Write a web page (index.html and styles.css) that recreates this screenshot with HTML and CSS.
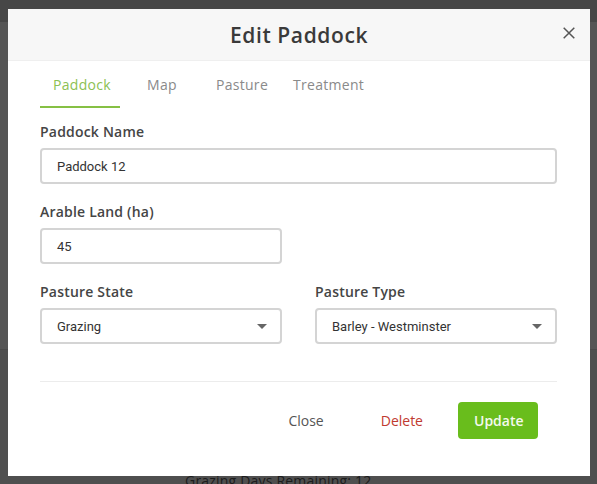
FILE: index.html
```html
<!DOCTYPE html>
<html>
<head>
<meta charset="utf-8">
<link rel="stylesheet" href="styles.css">
</head>
<body>
<div class="page">
  <div class="page-top"></div>
  <div class="page-main"></div>
  <div class="page-content">Grazing Days Remaining: 12</div>
</div>
<div class="modal">
  <div class="modal-header">
    <span></span>
    <h1 class="modal-title">Edit Paddock</h1>
    <button class="close-btn" aria-label="Close">
      <svg width="12" height="12" viewBox="0 0 12 12"><path d="M0.7 0.7 L11.3 11.3 M11.3 0.7 L0.7 11.3" stroke="#555" stroke-width="1.5" fill="none"/></svg>
    </button>
  </div>
  <div class="tabs">
    <div class="tab active">Paddock</div>
    <div class="tab">Map</div>
    <div class="tab">Pasture</div>
    <div class="tab">Treatment</div>
  </div>
  <div class="form">
    <div class="field">
      <label class="label">Paddock Name</label>
      <div class="input">Paddock 12</div>
    </div>
    <div class="row">
      <div class="field">
        <label class="label">Arable Land (ha)</label>
        <div class="input">45</div>
      </div>
    </div>
    <div class="row">
      <div class="field">
        <label class="label">Pasture State</label>
        <div class="input select">Grazing<span class="caret"></span></div>
      </div>
      <div class="field">
        <label class="label">Pasture Type</label>
        <div class="input select">Barley - Westminster<span class="caret"></span></div>
      </div>
    </div>
    <div class="divider"></div>
    <div class="footer">
      <button class="btn btn-close">Close</button>
      <button class="btn btn-delete">Delete</button>
      <button class="btn btn-update">Update</button>
    </div>
  </div>
</div>
</body>
</html>
```
FILE: styles.css
```css
* { box-sizing: border-box; }
html, body { margin: 0; padding: 0; }
body {
  width: 597px;
  height: 484px;
  overflow: hidden;
  background: #4f4f4f;
  font-family: "Open Sans", "Liberation Sans", sans-serif;
  position: relative;
}
.page-top { height: 22px; background: #474747; }
.page-main { height: 328px; background: #555555; border-bottom: 1px solid #4a4a4a; }
.page-content {
  padding: 121px 0 0 185px;
  font-size: 14px;
  line-height: 20px;
  color: #1c1c1c;
  letter-spacing: 0.2px;
}
.modal {
  position: absolute;
  top: 9px;
  left: 8px;
  width: 582px;
  height: 467px;
  background: #ffffff;
}
.modal-header {
  height: 52px;
  background: #f7f7f7;
  border-bottom: 1px solid #efefef;
  display: grid;
  grid-template-columns: 1fr auto 1fr;
  align-items: center;
  padding: 0 15px;
}
.modal-title {
  margin: 0;
  font-size: 21px;
  font-weight: 600;
  color: #3a3a3a;
  letter-spacing: 0.6px;
  line-height: 28px;
}
.close-btn {
  justify-self: end;
  background: none;
  border: 0;
  padding: 0;
  width: 12px;
  height: 12px;
  display: flex;
  margin-top: -4px;
}
.tabs {
  display: flex;
  padding: 0 32px;
}
.tab {
  min-width: 80px;
  padding: 14px 9px 11px 13px;
  text-align: center;
  font-size: 14px;
  line-height: 20px;
  color: #8a8a8a;
  letter-spacing: 0.3px;
  border-bottom: 2px solid transparent;
}
.tab.active {
  color: #8cc152;
  border-bottom-color: #86c044;
}
.form {
  padding: 14px 33px 0 32px;
}
.field { display: flex; flex-direction: column; }
.row {
  display: grid;
  grid-template-columns: 1fr 1fr;
  column-gap: 33px;
  margin-top: 18px;
}
.label {
  font-size: 14px;
  font-weight: 600;
  line-height: 20px;
  color: #454545;
  letter-spacing: 0.2px;
  margin-bottom: 6px;
}
.input {
  height: 36px;
  border: 2px solid #d4d4d4;
  border-radius: 4px;
  padding: 0 15px;
  display: flex;
  align-items: center;
  font-family: Roboto, "Liberation Sans", sans-serif;
  font-size: 13px;
  color: #333;
}
.select { justify-content: space-between; padding-right: 13px; }
.caret {
  width: 0;
  height: 0;
  border-left: 5px solid transparent;
  border-right: 5px solid transparent;
  border-top: 5px solid #666;
}
.divider {
  margin-top: 37px;
  height: 1px;
  background: #ececec;
}
.footer {
  display: flex;
  justify-content: flex-end;
  align-items: center;
  margin-top: 20px;
  padding-right: 19px;
  gap: 19px;
}
.btn {
  height: 37px;
  border: 0;
  border-radius: 4px;
  background: none;
  padding: 0 16px;
  font-family: "Open Sans", "Liberation Sans", sans-serif;
  font-size: 14px;
  cursor: pointer;
}
.btn-close { color: #555; margin-right: 6px; }
.btn-delete { color: #bf3a30; }
.btn-update {
  width: 80px;
  background: #69bd1c;
  color: #f4f9ee;
  font-weight: 600;
}
```
